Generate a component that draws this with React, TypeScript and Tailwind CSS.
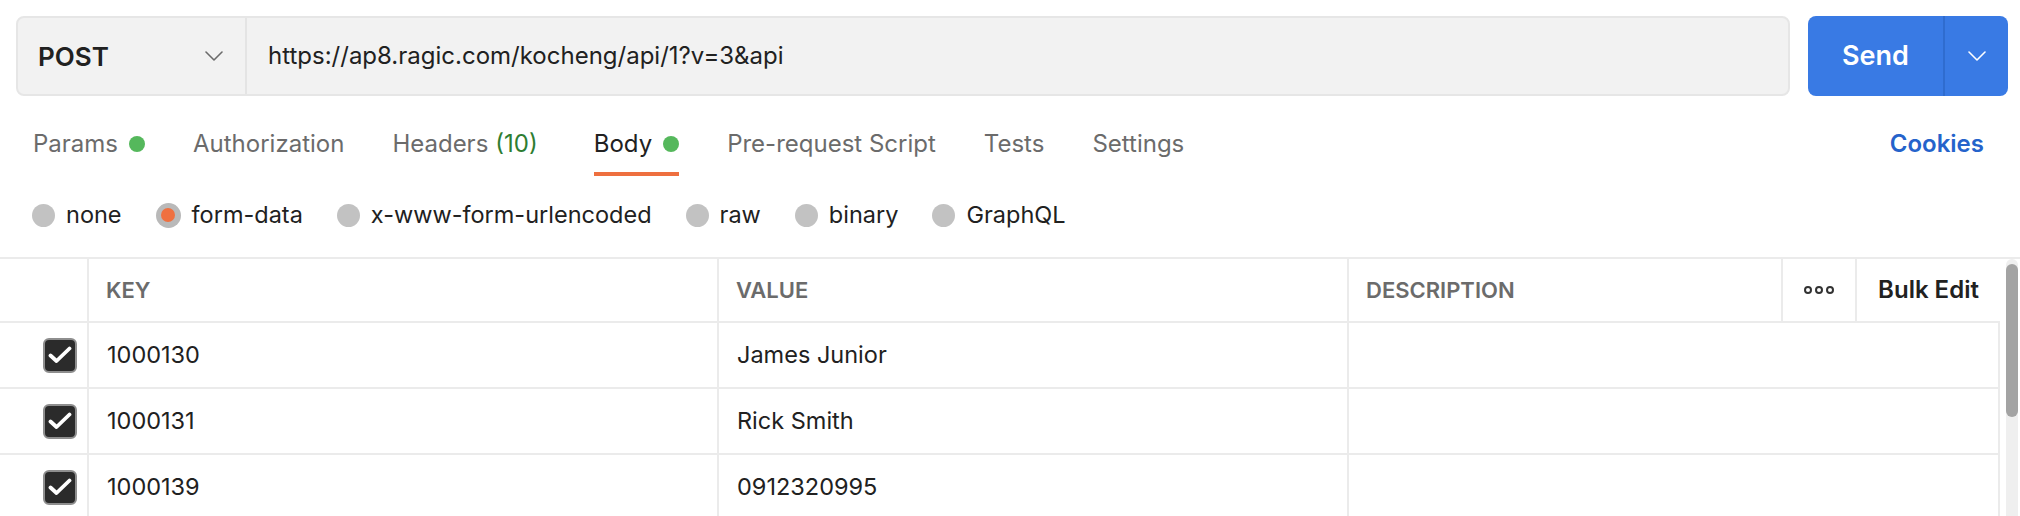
import { Fragment } from "react";

const tabs = [
  { label: "Params", dot: true },
  { label: "Authorization" },
  { label: "Headers", count: "(10)" },
  { label: "Body", dot: true, active: true },
  { label: "Pre-request Script" },
  { label: "Tests" },
  { label: "Settings" },
];

const bodyTypes = ["none", "form-data", "x-www-form-urlencoded", "raw", "binary", "GraphQL"];

const rows = [
  { key: "1000130", value: "James Junior" },
  { key: "1000131", value: "Rick Smith" },
  { key: "1000139", value: "0912320995" },
];

function Chevron({ color }: { color: string }) {
  return (
    <svg width="18" height="10" viewBox="0 0 18 10" fill="none">
      <polyline points="1,1 9,9 17,1" stroke={color} strokeWidth="1.6" strokeLinecap="round" strokeLinejoin="round" />
    </svg>
  );
}

function Checkbox() {
  return (
    <div className="w-[34px] h-[35px] rounded-[6px] bg-[#2b2b2b] border-2 border-[#8e8e8e] flex items-center justify-center">
      <svg width="24" height="18" viewBox="0 0 24 18" fill="none">
        <polyline points="2.5,9.5 8.5,15 21.5,2.5" stroke="#fff" strokeWidth="3.8" strokeLinecap="round" strokeLinejoin="round" />
      </svg>
    </div>
  );
}

export default function App() {
  return (
    <main className="w-[2020px] h-[516px] overflow-hidden bg-white font-['Inter',sans-serif] text-[#212121]">
      {/* Request bar */}
      <section className="flex pt-[16px] pl-[16px] pr-[12px] gap-[18px]">
        <div className="flex-1 h-[80px] flex rounded-[8px] border-2 border-[#e6e6e6] bg-[#f2f2f2]">
          <div className="w-[229px] flex items-center justify-between pl-[20px] pr-[22px] border-r-2 border-[#e4e4e4]">
            <span className="text-[26px] font-semibold">POST</span>
            <Chevron color="#6b6b6b" />
          </div>
          <div className="flex items-center pl-[21px] text-[24px]">https://ap8.ragic.com/kocheng/api/1?v=3&amp;api</div>
        </div>
        <div className="w-[200px] h-[80px] flex rounded-[8px] bg-[#397ae4] text-white">
          <div className="w-[135px] flex items-center justify-center text-[27px] font-semibold">Send</div>
          <div className="flex-1 flex items-center justify-center border-l-2 border-[#2f6ccf]">
            <Chevron color="#ffffff" />
          </div>
        </div>
      </section>

      {/* Tabs */}
      <nav className="flex items-start mt-[24px] pl-[33px] pr-[36px]">
        <div className="flex gap-[48px]">
          {tabs.map((t) => (
            <div key={t.label} className={`flex flex-col ${t.count ? "mr-[8px]" : ""}`}>
              <div className={`h-[48px] flex items-center text-[24px] ${t.active ? "text-[#212121]" : "text-[#6b6b6b]"}`}>
                {t.label}
                {t.count && <span className="ml-[7px] text-[#2e7d32]">{t.count}</span>}
                {t.dot && <span className="ml-[11px] w-[16px] h-[16px] rounded-full bg-[#55b85c]" />}
              </div>
              <div className={`mt-[4px] h-[4px] ${t.active ? "bg-[#ee6f3f]" : ""}`} />
            </div>
          ))}
        </div>
        <div className="ml-auto h-[48px] flex items-center text-[24px] font-semibold text-[#2563cb]">Cookies</div>
      </nav>

      {/* Body type */}
      <div className="flex items-center h-[48px] mt-[15px] pl-[32px] gap-[34px] text-[23.5px]">
        {bodyTypes.map((b) => (
          <label key={b} className="flex items-center gap-[11px]">
            {b === "form-data" ? (
              <span className="w-[25px] h-[25px] rounded-full bg-[#b9b9b9] flex items-center justify-center">
                <span className="w-[14px] h-[14px] rounded-full bg-[#ef7040]" />
              </span>
            ) : (
              <span className="w-[23px] h-[23px] rounded-full bg-[#c2c2c2]" />
            )}
            {b}
          </label>
        ))}
      </div>

      {/* Table */}
      <section className="mt-[18px] flex border-t-2 border-[#ebebeb]">
        <div className="w-[2000px]">
          <div className="grid grid-cols-[89px_630px_630px_434px_74px_1fr] h-[64px] border-b-2 border-[#ebebeb] text-[22px] font-semibold text-[#6b6b6b]">
            <div className="border-r-2 border-[#ebebeb]" />
            <div className="flex items-center pl-[17px] border-r-2 border-[#ebebeb]">KEY</div>
            <div className="flex items-center pl-[17px] border-r-2 border-[#ebebeb]">VALUE</div>
            <div className="flex items-center pl-[17px] border-r-2 border-[#ebebeb]">DESCRIPTION</div>
            <div className="flex items-center justify-center gap-[3px] border-r-2 border-[#ebebeb]">
              {[0, 1, 2].map((i) => (
                <span key={i} className="w-[8px] h-[8px] rounded-full border-2 border-[#333]" />
              ))}
            </div>
            <div className="flex items-center justify-center text-[24px] text-[#212121]">Bulk Edit</div>
          </div>
          {rows.map((r) => (
            <Fragment key={r.key}>
              <div className="grid grid-cols-[89px_630px_630px_1fr] h-[66px] border-b-2 border-r-2 border-[#ebebeb] text-[23.5px]">
                <div className="flex items-center justify-end pr-[10px] border-r-2 border-[#ebebeb]">
                  <Checkbox />
                </div>
                <div className="flex items-center pl-[18px] border-r-2 border-[#ebebeb]">{r.key}</div>
                <div className="flex items-center pl-[18px] border-r-2 border-[#ebebeb]">{r.value}</div>
                <div />
              </div>
            </Fragment>
          ))}
        </div>
        <div className="flex-1 pl-[6px] pr-[2px]">
          <div className="h-full bg-[#efefef] rounded-full pt-[5px]">
            <div className="h-[153px] rounded-full bg-[#a3a3a3]" />
          </div>
        </div>
      </section>
    </main>
  );
}
